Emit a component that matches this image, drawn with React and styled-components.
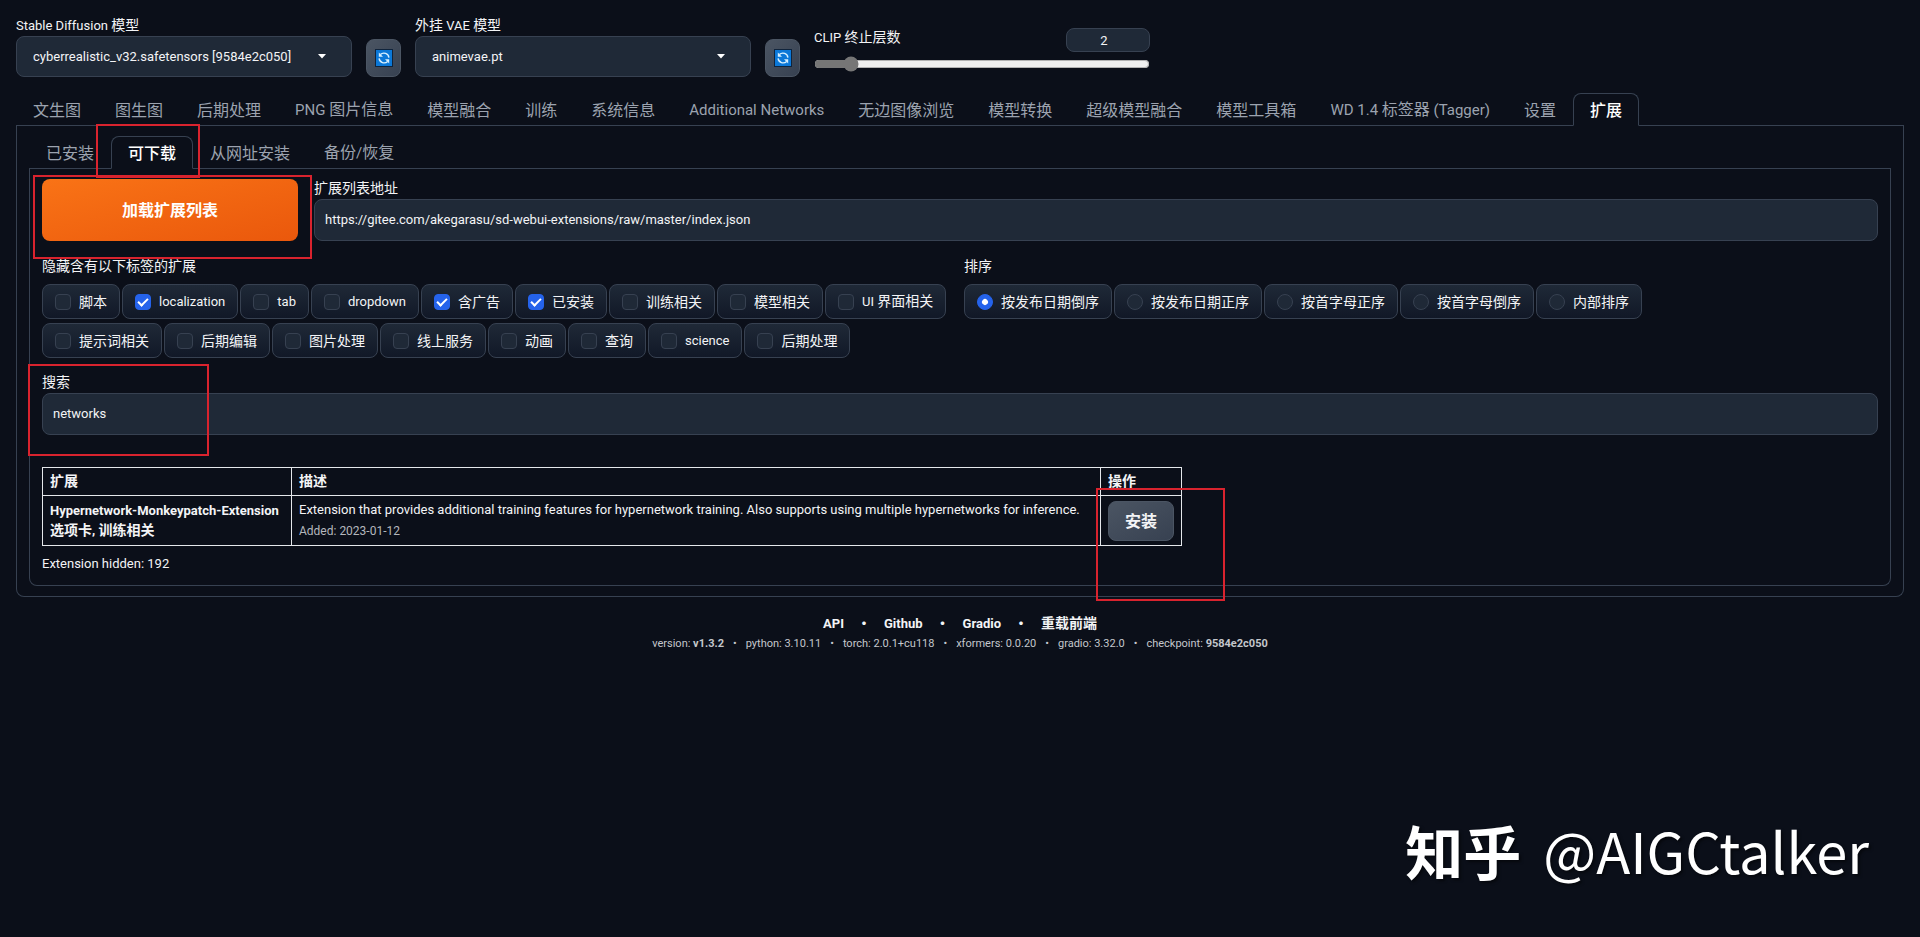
import { useState } from 'react'
import styled, { createGlobalStyle, css } from 'styled-components'

const TABS = [
    '文生图', '图生图', '后期处理', 'PNG 图片信息', '模型融合', '训练', '系统信息', 'Additional Networks',
    '无边图像浏览', '模型转换', '超级模型融合', '模型工具箱', 'WD 1.4 标签器 (Tagger)', '设置', '扩展',
]
const SUB_TABS = ['已安装', '可下载', '从网址安装', '备份/恢复']
const TAGS = [
    '脚本', 'localization', 'tab', 'dropdown', '含广告', '已安装', '训练相关', '模型相关', 'UI 界面相关',
    '提示词相关', '后期编辑', '图片处理', '线上服务', '动画', '查询', 'science', '后期处理',
]
const SORTS = ['按发布日期倒序', '按发布日期正序', '按首字母正序', '按首字母倒序', '内部排序']

const MARKS = [
    { x: 96, y: 124, w: 104, h: 54 },
    { x: 33, y: 175, w: 279, h: 84 },
    { x: 28, y: 364, w: 181, h: 92 },
    { x: 1096, y: 488, w: 129, h: 113 },
]

// Latin runs are set one pixel smaller than the Chinese around them
function Mixed({ children }) {
    return (
        <span>
            {children.split(/([\x20-\x7e]+)/).map((part, i) => (
                i % 2 ? <Latin key={i}>{part}</Latin> : part
            ))}
        </span>
    )
}

function RefreshIcon() {
    return (
        <svg width="18" height="18" viewBox="0 0 18 18" aria-hidden="true">
            <rect width="18" height="18" fill="#10243c" />
            <rect x="1" y="1" width="16" height="16" fill="#0b78d8" />
            <g fill="none" stroke="#d8f0ff" strokeWidth="1.4">
                <path d="M5.4 5.6A5 5 0 0 1 13.9 8.6" />
                <path d="M12.6 12.4A5 5 0 0 1 4.1 9.4" />
            </g>
            <path d="M3.8 3.6v4.2H8z" fill="#d8f0ff" />
            <path d="M14.2 14.4v-4.2H10z" fill="#d8f0ff" />
        </svg>
    )
}

function ModelSelect({ id, label, value }) {
    return (
        <ModelField>
            <FieldLabel htmlFor={id}><Mixed>{label}</Mixed></FieldLabel>
            <SelectBox>
                <Select id={id} defaultValue={value}>
                    <option>{value}</option>
                </Select>
                <svg width="8" height="5" viewBox="0 0 8 5" aria-hidden="true">
                    <path d="M0 0h8L4 4.6z" fill="#fff" />
                </svg>
            </SelectBox>
        </ModelField>
    )
}

function App() {
    const [tab, setTab] = useState('扩展')
    const [subTab, setSubTab] = useState('可下载')
    const [hidden, setHidden] = useState(['localization', '含广告', '已安装'])
    const [sort, setSort] = useState(SORTS[0])
    const [clip, setClip] = useState(2)

    const toggle = (tag) => {
        setHidden(hidden.includes(tag) ? hidden.filter(t => t !== tag) : [...hidden, tag])
    }

    return (
        <Page>
            <GlobalStyle />
            <QuickSettings>
                <ModelSelect id="checkpoint" label="Stable Diffusion 模型" value="cyberrealistic_v32.safetensors [9584e2c050]" />
                <ToolButton type="button" aria-label="刷新模型"><RefreshIcon /></ToolButton>
                <ModelSelect id="vae" label="外挂 VAE 模型" value="animevae.pt" />
                <ToolButton type="button" aria-label="刷新 VAE"><RefreshIcon /></ToolButton>
                <SliderField>
                    <SliderHead>
                        <FieldLabel htmlFor="clip"><Mixed>CLIP 终止层数</Mixed></FieldLabel>
                        <NumberInput aria-label="CLIP" value={clip} onChange={e => setClip(e.target.value)} />
                    </SliderHead>
                    <Slider id="clip" type="range" min="1" max="12" value={clip} onChange={e => setClip(e.target.value)} />
                </SliderField>
            </QuickSettings>

            <TabNav>
                {TABS.map(name => (
                    <Tab key={name} type="button" $active={name === tab} onClick={() => setTab(name)}>
                        <Mixed>{name}</Mixed>
                    </Tab>
                ))}
            </TabNav>
            <Panel>
                <TabNav>
                    {SUB_TABS.map(name => (
                        <Tab key={name} type="button" $active={name === subTab} onClick={() => setSubTab(name)}>
                            <Mixed>{name}</Mixed>
                        </Tab>
                    ))}
                </TabNav>
                <Panel>
                    <LoadRow>
                        <PrimaryButton type="button">加载扩展列表</PrimaryButton>
                        <GrowField>
                            <FieldLabel htmlFor="index-url">扩展列表地址</FieldLabel>
                            <TextInput id="index-url" defaultValue="https://gitee.com/akegarasu/sd-webui-extensions/raw/master/index.json" />
                        </GrowField>
                    </LoadRow>

                    <FilterRow>
                        <TagGroup>
                            <Legend>隐藏含有以下标签的扩展</Legend>
                            <Chips>
                                {TAGS.map(tag => (
                                    <Chip key={tag}>
                                        <Check type="checkbox" checked={hidden.includes(tag)} onChange={() => toggle(tag)} />
                                        <Mixed>{tag}</Mixed>
                                    </Chip>
                                ))}
                            </Chips>
                        </TagGroup>
                        <SortGroup>
                            <Legend>排序</Legend>
                            <Chips>
                                {SORTS.map(name => (
                                    <Chip key={name}>
                                        <Radio type="radio" name="sort" checked={name === sort} onChange={() => setSort(name)} />
                                        <span>{name}</span>
                                    </Chip>
                                ))}
                            </Chips>
                        </SortGroup>
                    </FilterRow>

                    <SearchField>
                        <FieldLabel htmlFor="search">搜索</FieldLabel>
                        <TextInput id="search" defaultValue="networks" />
                    </SearchField>

                    <Table>
                        <thead>
                            <tr>
                                <HeadCell $width={249}>扩展</HeadCell>
                                <HeadCell $width={809}>描述</HeadCell>
                                <HeadCell>操作</HeadCell>
                            </tr>
                        </thead>
                        <tbody>
                            <tr>
                                <Cell>
                                    <ExtensionLink href="#extension"><Latin>Hypernetwork-Monkeypatch-Extension</Latin></ExtensionLink>
                                    <ExtensionTags><Mixed>选项卡, 训练相关</Mixed></ExtensionTags>
                                </Cell>
                                <Cell>
                                    <Latin>Extension that provides additional training features for hypernetwork training. Also supports using multiple hypernetworks for inference.</Latin>
                                    <Added>Added: 2023-01-12</Added>
                                </Cell>
                                <Cell>
                                    <InstallButton type="button">安装</InstallButton>
                                </Cell>
                            </tr>
                        </tbody>
                    </Table>
                    <HiddenCount><Latin>Extension hidden: 192</Latin></HiddenCount>
                </Panel>
            </Panel>

            <Footer>
                <FooterLinks>
                    <a href="#api"><Latin>API</Latin></a>
                    <span>•</span>
                    <a href="#github"><Latin>Github</Latin></a>
                    <span>•</span>
                    <a href="#gradio"><Latin>Gradio</Latin></a>
                    <span>•</span>
                    <a href="#reload">重载前端</a>
                </FooterLinks>
                <Versions>
                    <span>version: <b>v1.3.2</b></span>
                    <span>•</span>
                    <span>python: 3.10.11</span>
                    <span>•</span>
                    <span>torch: 2.0.1+cu118</span>
                    <span>•</span>
                    <span>xformers: 0.0.20</span>
                    <span>•</span>
                    <span>gradio: 3.32.0</span>
                    <span>•</span>
                    <span>checkpoint: <b>9584e2c050</b></span>
                </Versions>
            </Footer>

            {MARKS.map(mark => <Mark key={mark.x} $mark={mark} />)}
            <Watermark>
                <b>知乎</b>
                <span>@AIGCtalker</span>
            </Watermark>
        </Page>
    )
}

export default App

const GlobalStyle = createGlobalStyle`
    * {
        box-sizing: border-box;
    }
    body {
        margin: 0;
        background: #0b0f19;
        color: #f3f4f6;
        font-family: "Noto Sans CJK SC", sans-serif;
        font-size: 14px;
        line-height: 20px;
    }
    button, input, select {
        font: inherit;
        color: inherit;
        margin: 0;
    }
    a {
        color: inherit;
        text-decoration: none;
    }
`

const latinText = css`
    font-family: Roboto, "Noto Sans CJK SC", sans-serif;
    font-size: 13px;
`

const Latin = styled.span`
    font-family: Roboto, "Noto Sans CJK SC", sans-serif;
    font-size: calc(1em - 1px);
`

const Page = styled.div`
    position: relative;
    min-height: 100vh;
    padding: 16px 16px 0;
`

const QuickSettings = styled.div`
    display: flex;
    align-items: flex-end;
    gap: 14px;
    margin-bottom: 16px;
`

const ModelField = styled.div`
    flex: 0 1 336px;
    min-width: 0;
`

const FieldLabel = styled.label`
    display: block;
    height: 20px;
    line-height: 16px;
`

const SelectBox = styled.div`
    display: flex;
    align-items: center;
    height: 41px;
    padding-right: 25px;
    background: #1f2937;
    border: 1px solid #374151;
    border-radius: 8px;
`

const Select = styled.select`
    flex: 1;
    min-width: 0;
    height: 100%;
    padding: 0 16px;
    appearance: none;
    background: none;
    border: 0;
    outline: none;
    ${latinText}
`

const buttonFill = css`
    background: linear-gradient(to bottom right, #4b5563, #374151);
    border: 1px solid #4b5563;
    border-radius: 8px;
`

const ToolButton = styled.button`
    display: flex;
    align-items: center;
    justify-content: center;
    width: 35px;
    height: 38px;
    padding: 0;
    ${buttonFill}
`

const SliderField = styled.div`
    flex: 0 1 336px;
    padding-bottom: 5px;
`

const SliderHead = styled.div`
    display: flex;
    justify-content: space-between;
    height: 28px;
`

const NumberInput = styled.input`
    width: 84px;
    height: 24px;
    padding: 0 8px 0 0;
    text-align: center;
    background: #1f2937;
    border: 1px solid #374151;
    border-radius: 8px;
    ${latinText}
`

const Slider = styled.input`
    display: block;
    width: 100%;
    height: 16px;
    accent-color: #767676;
`

const TabNav = styled.div`
    display: flex;
    border-bottom: 1px solid #374151;
`

const Tab = styled.button`
    height: 33px;
    margin-bottom: -1px;
    padding: 0 16px 2px;
    font-size: 16px;
    line-height: 24px;
    white-space: nowrap;
    color: ${p => p.$active ? '#fff' : '#9ca3af'};
    font-weight: ${p => p.$active ? 500 : 400};
    background: ${p => p.$active ? '#0b0f19' : 'transparent'};
    border: 1px solid ${p => p.$active ? '#374151' : 'transparent'};
    border-bottom-color: ${p => p.$active ? '#0b0f19' : 'transparent'};
    border-radius: 8px 8px 0 0;
`

const Panel = styled.div`
    padding: 10px 12px;
    border: 1px solid #374151;
    border-top: 0;
    border-radius: 0 0 8px 8px;
`

const LoadRow = styled.div`
    display: flex;
    gap: 16px;
`

const PrimaryButton = styled.button`
    width: 256px;
    height: 62px;
    padding: 0 0 2px;
    font-size: 16px;
    font-weight: 700;
    color: #fff;
    background: linear-gradient(to bottom right, #f97316, #ea580c);
    border: 0;
    border-radius: 8px;
`

const GrowField = styled.div`
    flex: 1;
`

const TextInput = styled.input`
    display: block;
    width: 100%;
    height: 42px;
    padding: 0 10px 2px;
    background: #1f2937;
    border: 1px solid #374151;
    border-radius: 8px;
    outline: none;
    ${latinText}
`

const FilterRow = styled.div`
    display: flex;
    gap: 16px;
    margin-top: 15px;
`

const Group = styled.fieldset`
    min-width: 0;
    margin: 0;
    padding: 0;
    border: 0;
`

const TagGroup = styled(Group)`
    flex: 0 1 906px;
`

const SortGroup = styled(Group)`
    flex: 1;
`

const Legend = styled.legend`
    height: 28px;
    padding: 0;
    line-height: 18px;
`

const Chips = styled.div`
    display: flex;
    flex-wrap: wrap;
    gap: 4px 2px;
`

const Chip = styled.label`
    display: flex;
    align-items: center;
    gap: 8px;
    height: 35px;
    padding: 0 12px;
    background: linear-gradient(to bottom, #1f2937, #111827);
    border: 1px solid #374151;
    border-radius: 8px;

    > span {
        padding-bottom: 2px;
    }
`

const Check = styled.input`
    display: grid;
    place-content: center;
    flex: none;
    width: 16px;
    height: 16px;
    appearance: none;
    background: #1f2937;
    border: 1px solid #374151;
    border-radius: 4px;

    &:checked {
        background: #2563eb;
        border-color: #2563eb;
    }
    &:checked::before {
        content: '';
        width: 4px;
        height: 8px;
        margin-bottom: 2px;
        border: solid #fff;
        border-width: 0 2px 2px 0;
        transform: rotate(45deg);
    }
`

const Radio = styled(Check)`
    border-radius: 50%;

    &:checked::before {
        width: 6px;
        height: 6px;
        margin: 0;
        background: #fff;
        border: 0;
        border-radius: 50%;
    }
`

const SearchField = styled.div`
    margin-top: 15px;
`

const Table = styled.table`
    margin-top: 32px;
    border-collapse: collapse;
    line-height: 19px;
    white-space: nowrap;
`

const cellBox = css`
    padding: 3px 7px 4px;
    border: 1px solid #e5e7eb;
    text-align: left;
    vertical-align: top;
`

const HeadCell = styled.th`
    ${cellBox}
    width: ${p => p.$width ? `${p.$width}px` : 'auto'};
    height: 28px;
`

const Cell = styled.td`
    ${cellBox}
`

const ExtensionLink = styled.a`
    display: block;
    padding-top: 1px;
    font-weight: 700;
`

const ExtensionTags = styled.div`
    font-weight: 700;
`

const Added = styled.div`
    padding-top: 3px;
    font-family: Roboto, sans-serif;
    font-size: 12px;
    color: #b4b7bd;
`

const InstallButton = styled.button`
    display: block;
    width: 66px;
    height: 40px;
    margin-top: 2px;
    padding: 0 0 2px;
    font-size: 16px;
    font-weight: 700;
    ${buttonFill}
`

const HiddenCount = styled.p`
    margin: 6px 0 1px;
`

const Footer = styled.footer`
    margin-top: 15px;
`

const FooterLinks = styled.div`
    display: flex;
    justify-content: center;
    gap: 13px;
    font-weight: 700;
`

const Versions = styled.div`
    display: flex;
    justify-content: center;
    gap: 9px;
    font-family: Roboto, sans-serif;
    font-size: 11px;
    color: #c4c7cc;
`

const Mark = styled.div`
    position: absolute;
    left: ${p => p.$mark.x}px;
    top: ${p => p.$mark.y}px;
    width: ${p => p.$mark.w}px;
    height: ${p => p.$mark.h}px;
    border: 2px solid #d9232e;
    pointer-events: none;
`

const Watermark = styled.div`
    position: absolute;
    right: 51px;
    bottom: 45px;
    display: flex;
    align-items: center;
    gap: 22px;
    font-size: 56px;
    line-height: 84px;
    color: #fff;
    text-shadow: 2px 2px 3px rgba(0, 0, 0, 0.5);
    pointer-events: none;

    > b {
        font-size: 58px;
    }
`
